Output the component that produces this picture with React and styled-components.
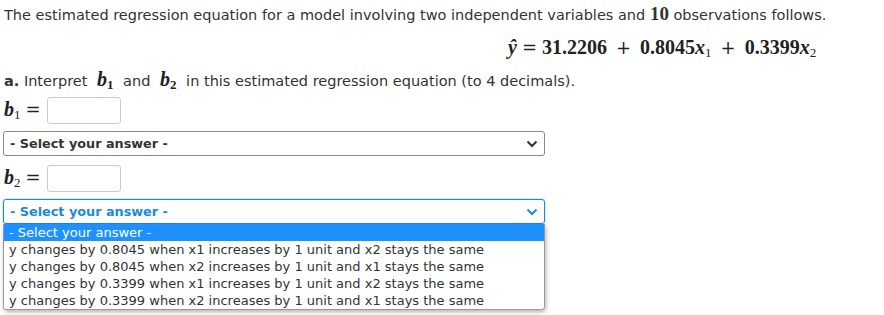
import React from 'react';
import styled, { createGlobalStyle } from 'styled-components';

const GlobalStyle = createGlobalStyle`
  body {
    margin: 0;
    background: #fff;
    font-family: "DejaVu Sans", Verdana, sans-serif;
    color: #333;
  }
`;

const options = [
  '- Select your answer -',
  'y changes by 0.8045 when x1 increases by 1 unit and x2 stays the same',
  'y changes by 0.8045 when x2 increases by 1 unit and x1 stays the same',
  'y changes by 0.3399 when x1 increases by 1 unit and x2 stays the same',
  'y changes by 0.3399 when x2 increases by 1 unit and x1 stays the same',
];

const Chevron = ({ color }) => (
  <svg width="12" height="8" viewBox="0 0 12 8">
    <path d="M1.5 1.5 L6 6 L10.5 1.5" fill="none" stroke={color} strokeWidth="2" />
  </svg>
);

const App = () => {
  return (
    <Page>
      <GlobalStyle />
      <Intro>
        The estimated regression equation for a model involving two independent variables and <Num>10</Num> observations follows.
      </Intro>
      <Equation>
        <Var>ŷ</Var>
        <Op>=</Op>31.2206
        <Op $wide>+</Op>0.8045<Var>x</Var><Sub>1</Sub>
        <Op $wide>+</Op>0.3399<Var>x</Var><Sub>2</Sub>
      </Equation>
      <Question>
        <b>a.</b> Interpret <InlineMath><Var>b</Var><Sub $bold>1</Sub></InlineMath> and{' '}
        <InlineMath><Var>b</Var><Sub $bold>2</Sub></InlineMath> in this estimated regression equation (to 4 decimals).
      </Question>

      <InputRow>
        <Label><Var>b</Var><Sub>1</Sub><Op>=</Op></Label>
        <AnswerBox />
      </InputRow>
      <Select>
        <span>- Select your answer -</span>
        <Chevron color="#333" />
      </Select>

      <InputRow>
        <Label><Var>b</Var><Sub>2</Sub><Op>=</Op></Label>
        <AnswerBox />
      </InputRow>
      <SelectWrap>
        <Select $open>
          <span>- Select your answer -</span>
          <Chevron color="#1a8ad9" />
        </Select>
        <OptionList>
          {options.map((o, i) => (
            <Option key={o} $active={i === 0}>{o}</Option>
          ))}
        </OptionList>
      </SelectWrap>
    </Page>
  );
};

const Page = styled.div`
  padding: 4px 0 0 4px;
  width: 884px;
  height: 315px;
  box-sizing: border-box;
  font-size: 14.5px;
  overflow: hidden;
`;

const Intro = styled.div`
  line-height: 20px;
  white-space: nowrap;
`;

const Num = styled.span`
  font-family: "Liberation Serif", serif;
  font-weight: bold;
  font-size: 19px;
`;

const Equation = styled.div`
  font-family: "Liberation Serif", serif;
  font-weight: bold;
  font-size: 20px;
  line-height: 24px;
  margin-top: 10px;
  padding-left: 504px;
  white-space: nowrap;
  color: #222;
`;

const Op = styled.span`
  font-family: "DejaVu Serif", serif;
  font-weight: normal;
  font-size: 18px;
  margin: 0 ${p => (p.$wide ? '9px' : '5px')};
`;

const Var = styled.i`
  font-family: "Liberation Serif", serif;
  font-weight: bold;
  font-size: 20px;
`;

const Sub = styled.sub`
  font-family: "Liberation Serif", serif;
  font-weight: ${p => (p.$bold ? 'bold' : 'normal')};
  font-size: 13px;
  vertical-align: -3px;
`;

const InlineMath = styled.span`
  margin: 0 5px;
  font-size: 22px;
  color: #222;
`;

const Question = styled.div`
  line-height: 20px;
  margin-top: 4px;
  white-space: nowrap;
`;

const InputRow = styled.div`
  display: flex;
  align-items: center;
  gap: 4px;
  height: 27px;
  margin-top: 2px;

  & + & {
    margin-top: 8px;
  }
`;

const Label = styled.span`
  font-family: "Liberation Serif", serif;
  font-size: 20px;
  width: 39px;
  white-space: nowrap;
  color: #222;
`;

const AnswerBox = styled.div`
  width: 72px;
  height: 25px;
  border: 1px solid #ccc;
  border-radius: 3px;
  background: #fff;
`;

const SelectWrap = styled.div`
  position: relative;
`;

const Select = styled.div`
  display: flex;
  align-items: center;
  justify-content: space-between;
  width: 542px;
  height: 25px;
  box-sizing: border-box;
  margin: 7px 0 9px -1px;
  padding: 0 6px 0 6px;
  border: 1px solid ${p => (p.$open ? '#1a8ad9' : '#888')};
  border-radius: 3px;
  font-weight: bold;
  font-size: 12.8px;
  color: ${p => (p.$open ? '#1a8ad9' : '#333')};
  box-shadow: ${p => (p.$open ? '0 0 2px #6fb6ef' : 'none')};
`;

const OptionList = styled.div`
  position: absolute;
  top: 25px;
  left: -1px;
  width: 542px;
  box-sizing: border-box;
  border: 1px solid #999;
  border-top: none;
  border-radius: 0 0 4px 4px;
  background: #fff;
  box-shadow: 1px 2px 4px rgba(0, 0, 0, 0.3);
  overflow: hidden;
`;

const Option = styled.div`
  height: 17px;
  line-height: 17px;
  padding-left: 5px;
  font-size: 13px;
  white-space: nowrap;
  background: ${p => (p.$active ? '#1e90ff' : '#fff')};
  color: ${p => (p.$active ? '#fff' : '#333')};
`;

export default App;
